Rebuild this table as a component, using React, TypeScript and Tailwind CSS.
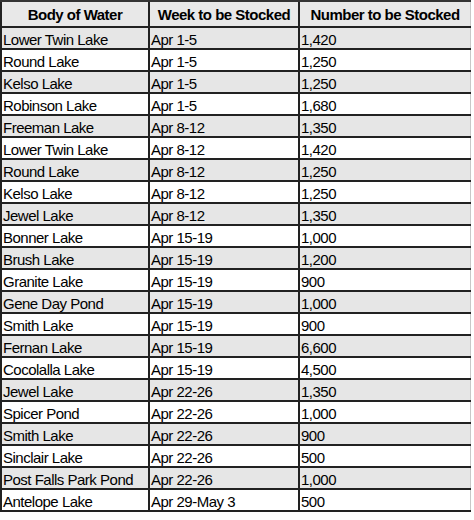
const rows: [string, string, string][] = [
  ["Lower Twin Lake", "Apr 1-5", "1,420"],
  ["Round Lake", "Apr 1-5", "1,250"],
  ["Kelso Lake", "Apr 1-5", "1,250"],
  ["Robinson Lake", "Apr 1-5", "1,680"],
  ["Freeman Lake", "Apr 8-12", "1,350"],
  ["Lower Twin Lake", "Apr 8-12", "1,420"],
  ["Round Lake", "Apr 8-12", "1,250"],
  ["Kelso Lake", "Apr 8-12", "1,250"],
  ["Jewel Lake", "Apr 8-12", "1,350"],
  ["Bonner Lake", "Apr 15-19", "1,000"],
  ["Brush Lake", "Apr 15-19", "1,200"],
  ["Granite Lake", "Apr 15-19", "900"],
  ["Gene Day Pond", "Apr 15-19", "1,000"],
  ["Smith Lake", "Apr 15-19", "900"],
  ["Fernan Lake", "Apr 15-19", "6,600"],
  ["Cocolalla Lake", "Apr 15-19", "4,500"],
  ["Jewel Lake", "Apr 22-26", "1,350"],
  ["Spicer Pond", "Apr 22-26", "1,000"],
  ["Smith Lake", "Apr 22-26", "900"],
  ["Sinclair Lake", "Apr 22-26", "500"],
  ["Post Falls Park Pond", "Apr 22-26", "1,000"],
  ["Antelope Lake", "Apr 29-May 3", "500"],
];

export default function App() {
  return (
    <div className="w-[474px] h-[520px] bg-white text-[15px] leading-[17px] tracking-[-0.5px] text-black font-['Liberation_Sans',Arial,sans-serif]">
      <div className="w-[471px] border-b-2 border-[#222]">
        {/* header */}
        <div className="flex h-[26px] border-t-2 border-[#333] bg-[#e8e8e8] font-bold">
          <div className="w-[148px] border-l-2 border-[#222] flex items-center justify-center">Body of Water</div>
          <div className="w-[150px] border-l-2 border-[#222] flex items-center justify-center">Week to be Stocked</div>
          <div className="flex-1 border-l-2 border-r border-l-[#222] border-r-[#c8c8c8] flex items-center justify-center">Number to be Stocked</div>
        </div>
        {rows.map((r, i) => (
          <div key={i} className={`flex h-[22px] border-t-2 border-[#222] ${i % 2 === 0 ? "bg-[#e6e6e6]" : "bg-white"}`}>
            <div className="w-[148px] border-l-2 border-[#222] flex items-end pl-[1px] whitespace-nowrap">{r[0]}</div>
            <div className="w-[150px] border-l-2 border-[#222] flex items-end pl-[1px] whitespace-nowrap">{r[1]}</div>
            <div className="flex-1 border-l-2 border-r border-l-[#222] border-r-[#c8c8c8] flex items-end pl-[1px]">{r[2]}</div>
          </div>
        ))}
      </div>
    </div>
  );
}
